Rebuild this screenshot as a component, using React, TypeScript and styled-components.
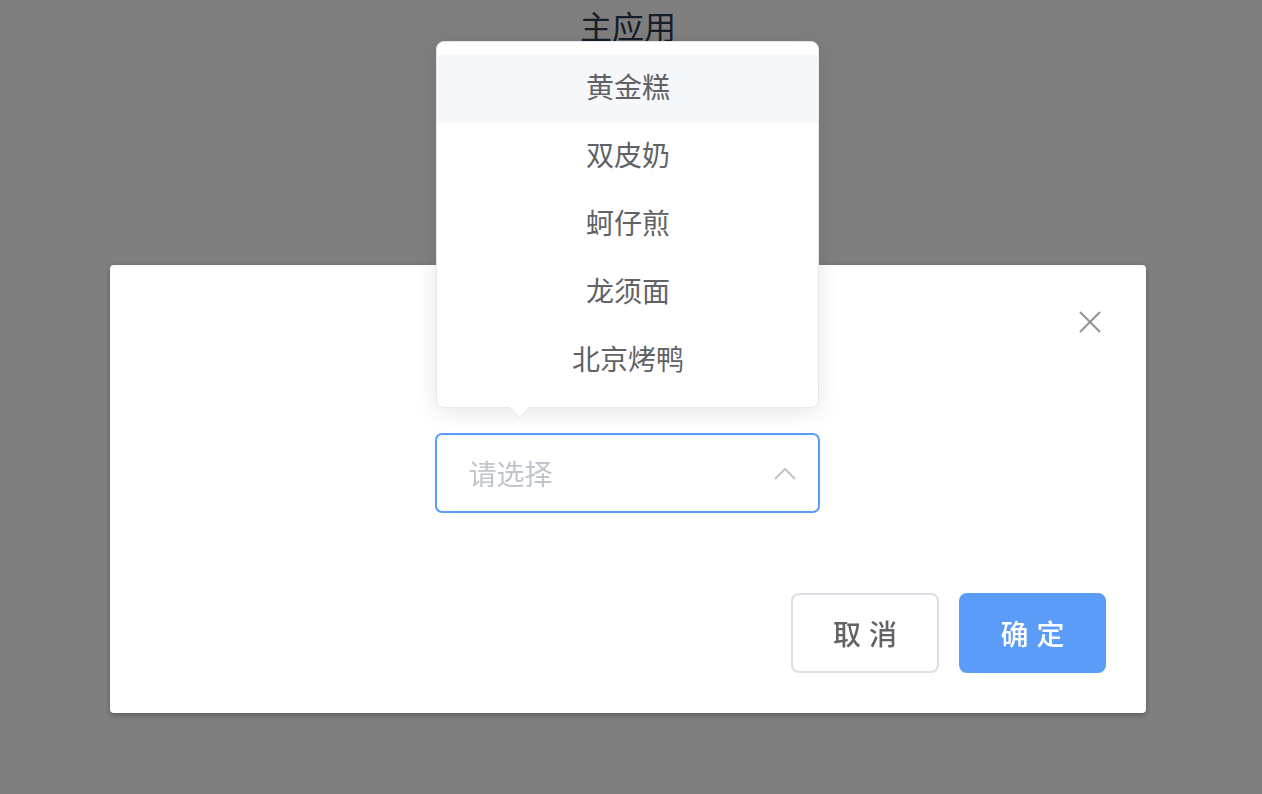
import React from 'react';
import styled, { createGlobalStyle } from 'styled-components';

const GlobalStyle = createGlobalStyle`
  html, body {
    margin: 0;
    padding: 0;
    background: #ffffff;
    font-family: "Helvetica Neue", "Liberation Sans", "Noto Sans CJK SC", sans-serif;
  }
`;

const options = ['黄金糕', '双皮奶', '蚵仔煎', '龙须面', '北京烤鸭'];

const Page = styled.div`
  height: 794px;
  overflow: hidden;
`;

const AppTitle = styled.h1`
  margin: 0;
  padding-top: 8px;
  text-align: center;
  font-size: 32px;
  line-height: 40px;
  font-weight: 400;
  color: #2c3e50;
  padding-right: 6px;
`;

// 遮罩层
const Overlay = styled.div`
  position: fixed;
  inset: 0;
  background: rgba(0, 0, 0, 0.5);
  padding: 265px 116px 0 110px;
  box-sizing: border-box;
`;

const Dialog = styled.div`
  background: #fff;
  border-radius: 4px;
  box-shadow: 0 2px 6px rgba(0, 0, 0, 0.3);
`;

const DialogHeader = styled.div`
  display: flex;
  align-items: flex-start;
  padding: 40px 40px 20px;
`;

const DialogTitle = styled.span`
  flex: 1;
  min-height: 48px;
  line-height: 48px;
  font-size: 36px;
  color: #303133;
`;

const CloseButton = styled.button`
  width: 32px;
  height: 32px;
  padding: 0;
  border: none;
  background: transparent;
  display: flex;
  align-items: center;
  justify-content: center;
  cursor: pointer;
  margin-top: 1px;
`;

const DialogBody = styled.div`
  padding: 60px 41px 60px 39px;
  display: flex;
  justify-content: center;
`;

const SelectWrap = styled.div`
  position: relative;
  width: 385px;
`;

const SelectBox = styled.div`
  height: 80px;
  box-sizing: border-box;
  border: 2px solid #5a9cf8;
  border-radius: 7px;
  display: flex;
  align-items: center;
  justify-content: space-between;
  padding: 0 22px 0 32px;
`;

const Placeholder = styled.span`
  font-size: 28px;
  color: #c0c4cc;
`;

const Dropdown = styled.div`
  position: absolute;
  left: 1px;
  right: 1px;
  bottom: calc(100% + 25px);
  background: #fff;
  border: 1px solid #e4e7ed;
  border-radius: 8px;
  box-shadow: 0 4px 24px rgba(0, 0, 0, 0.1);
  padding: 13px 0 12px;
`;

const Arrow = styled.div`
  position: absolute;
  left: 75px;
  bottom: -8px;
  width: 14px;
  height: 14px;
  background: #fff;
  border-right: 1px solid #e4e7ed;
  border-bottom: 1px solid #e4e7ed;
  transform: rotate(45deg);
`;

const Option = styled.div<{ hovered?: boolean }>`
  height: 68px;
  line-height: 68px;
  text-align: center;
  font-size: 28px;
  color: #606266;
  padding-left: 2px;
  background: ${props => (props.hovered ? '#f5f7fa' : '#fff')};
`;

const DialogFooter = styled.div`
  display: flex;
  justify-content: flex-end;
  gap: 20px;
  padding: 20px 40px 40px;
`;

const Button = styled.button<{ primary?: boolean }>`
  width: ${props => (props.primary ? '147px' : '148px')};
  height: 80px;
  box-sizing: border-box;
  border-radius: 8px;
  font-family: inherit;
  font-size: 28px;
  font-weight: 500;
  cursor: pointer;
  border: 2px solid ${props => (props.primary ? '#5a9cf8' : '#dcdfe6')};
  background: ${props => (props.primary ? '#5a9cf8' : '#fff')};
  color: ${props => (props.primary ? '#fff' : '#606266')};
`;

const App: React.FC = () => {
  return (
    <Page>
      <GlobalStyle />
      <AppTitle>主应用</AppTitle>
      <Overlay>
        <Dialog>
          <DialogHeader>
            <DialogTitle />
            <CloseButton aria-label="关闭">
              <svg width="22" height="22" viewBox="0 0 22 22">
                <path d="M1 1 L21 21 M21 1 L1 21" stroke="#909399" strokeWidth="2" fill="none" />
              </svg>
            </CloseButton>
          </DialogHeader>
          <DialogBody>
            <SelectWrap>
              <Dropdown>
                {options.map((o, i) => (
                  <Option key={o} hovered={i === 0}>{o}</Option>
                ))}
                <Arrow />
              </Dropdown>
              <SelectBox>
                <Placeholder>请选择</Placeholder>
                <svg width="22" height="13" viewBox="0 0 22 13">
                  <path d="M1 12 L11 2 L21 12" stroke="#c0c4cc" strokeWidth="2" fill="none" />
                </svg>
              </SelectBox>
            </SelectWrap>
          </DialogBody>
          <DialogFooter>
            <Button>取 消</Button>
            <Button primary>确 定</Button>
          </DialogFooter>
        </Dialog>
      </Overlay>
    </Page>
  );
};

export default App;
